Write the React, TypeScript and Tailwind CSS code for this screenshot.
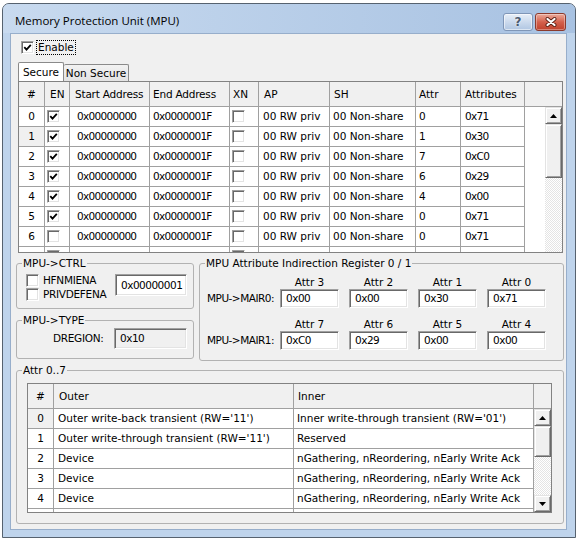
import React from 'react';

// Windows 7 "Basic" style MPU dialog

const regions = [
  { en: true, attr: '0', attrs: '0x71' },
  { en: true, attr: '1', attrs: '0x30' },
  { en: true, attr: '7', attrs: '0xC0' },
  { en: true, attr: '6', attrs: '0x29' },
  { en: true, attr: '4', attrs: '0x00' },
  { en: true, attr: '0', attrs: '0x71' },
  { en: false, attr: '0', attrs: '0x71' },
  { en: false, attr: '0', attrs: '0x71' },
];

const attrRows = [
  { outer: "Outer write-back transient (RW='11')", inner: "Inner write-through transient (RW='01')" },
  { outer: "Outer write-through transient (RW='11')", inner: 'Reserved' },
  { outer: 'Device', inner: 'nGathering, nReordering, nEarly Write Ack' },
  { outer: 'Device', inner: 'nGathering, nReordering, nEarly Write Ack' },
  { outer: 'Device', inner: 'nGathering, nReordering, nEarly Write Ack' },
  { outer: 'Device', inner: 'nGathering, nReordering, nEarly Write Ack' },
];

const mair0 = [
  { label: 'Attr 3', value: '0x00' },
  { label: 'Attr 2', value: '0x00' },
  { label: 'Attr 1', value: '0x30' },
  { label: 'Attr 0', value: '0x71' },
];

const mair1 = [
  { label: 'Attr 7', value: '0xC0' },
  { label: 'Attr 6', value: '0x29' },
  { label: 'Attr 5', value: '0x00' },
  { label: 'Attr 4', value: '0x00' },
];

const headCell = 'flex h-full items-center border-r border-[#a0a0a0] bg-[#f0f0f0]';
const bodyCell = 'flex h-full items-center border-r border-[#a0a0a0]';
const hex = 'tracking-[-0.7px]';

function Tick() {
  return (
    <svg width="9" height="9" viewBox="0 0 9 9" className="block">
      <path d="M1.3 4.2 L3.5 6.6 L7.8 1.9" fill="none" stroke="#000" strokeWidth="1.8" />
    </svg>
  );
}

function CheckBox({ checked = false }: { checked?: boolean }) {
  return (
    <span className="flex h-[13px] w-[13px] shrink-0 items-center justify-center border border-t-[#a0a0a0] border-l-[#a0a0a0] border-b-white border-r-white bg-white shadow-[inset_1px_1px_0_#696969,inset_-1px_-1px_0_#e3e3e3]">
      {checked && <Tick />}
    </span>
  );
}

function TextBox({ value, className = '', readOnly = false }: { value: string; className?: string; readOnly?: boolean }) {
  return (
    <div
      className={`flex items-center border border-t-[#a0a0a0] border-l-[#a0a0a0] border-b-white border-r-white pl-[5px] tracking-[-0.5px] shadow-[inset_1px_1px_0_#696969,inset_-1px_-1px_0_#e3e3e3] ${
        readOnly ? 'bg-[#f0f0f0]' : 'bg-white'
      } ${className}`}
    >
      {value}
    </div>
  );
}

function Group({ label, className = '', children }: { label: string; className?: string; children?: React.ReactNode }) {
  return (
    <div className={`relative rounded-[3px] border border-[#b2b2b2] ${className}`}>
      <span className="absolute left-[5px] top-[-7px] bg-[#f0f0f0] px-[1px] leading-[13px]">{label}</span>
      {children}
    </div>
  );
}

function Arrow({ down = false }: { down?: boolean }) {
  return (
    <svg width="7" height="4" viewBox="0 0 7 4" className="block">
      <path d={down ? 'M0 0 H7 L3.5 4 Z' : 'M0 4 H7 L3.5 0 Z'} fill="#000" />
    </svg>
  );
}

const raised =
  'border border-t-[#e3e3e3] border-l-[#e3e3e3] border-b-[#696969] border-r-[#696969] bg-[#f0f0f0] shadow-[inset_1px_1px_0_#fff,inset_-1px_-1px_0_#a0a0a0]';

function ScrollBar({ thumb, down = false }: { thumb: string; down?: boolean }) {
  return (
    <div className="flex h-full w-[17px] shrink-0 flex-col">
      <div className={`flex h-[17px] shrink-0 items-center justify-center ${raised}`}>
        <Arrow />
      </div>
      <div className={`shrink-0 ${thumb} ${raised}`} />
      <div className="flex-1 bg-[repeating-conic-gradient(#e4e4e4_0%_25%,#ffffff_0%_50%)] bg-[length:2px_2px]" />
      {down && (
        <div className={`flex h-[17px] shrink-0 items-center justify-center ${raised}`}>
          <Arrow down />
        </div>
      )}
    </div>
  );
}

function RegionTable() {
  return (
    <div className="ml-[7px] flex h-[172px] w-[545px] flex-col border border-[#828282] bg-white">
      <div className="flex h-[25px] shrink-0 border-b border-[#a0a0a0]">
        <div className={`${headCell} w-[26px] justify-center`}>#</div>
        <div className={`${headCell} w-[25px] pl-[5px]`}>EN</div>
        <div className={`${headCell} w-[80px] pl-[5px] tracking-[-0.2px]`}>Start Address</div>
        <div className={`${headCell} w-[80px] pl-[3px] tracking-[-0.2px]`}>End Address</div>
        <div className={`${headCell} w-[29px] pl-[3px]`}>XN</div>
        <div className={`${headCell} w-[71px] pl-[5px]`}>AP</div>
        <div className={`${headCell} w-[86px] pl-[4px]`}>SH</div>
        <div className={`${headCell} w-[45px] pl-[3px]`}>Attr</div>
        <div className={`${headCell} w-[64px] pl-[4px]`}>Attributes</div>
        <div className="h-full flex-1 bg-[#f0f0f0]" />
      </div>
      <div className="flex min-h-0 flex-1">
        <div className="w-[506px] shrink-0 overflow-hidden">
          {regions.map((r, i) => (
            <div key={i} className="flex h-[20px] border-b border-[#a0a0a0]">
              <div className={`${bodyCell} w-[26px] justify-center ${i === 1 ? 'bg-[#f0f0f0]' : ''}`}>{i}</div>
              <div className={`${bodyCell} w-[25px] pl-[2px]`}>
                <CheckBox checked={r.en} />
              </div>
              <div className={`${bodyCell} w-[80px] pl-[7px] ${hex}`}>0x00000000</div>
              <div className={`${bodyCell} w-[80px] pl-[3px] ${hex}`}>0x0000001F</div>
              <div className={`${bodyCell} w-[29px] pl-[2px]`}>
                <CheckBox />
              </div>
              <div className={`${bodyCell} w-[71px] pl-[4px]`}>00 RW priv</div>
              <div className={`${bodyCell} w-[86px] pl-[3px]`}>00 Non-share</div>
              <div className={`${bodyCell} w-[45px] pl-[3px]`}>{r.attr}</div>
              <div className={`${bodyCell} w-[64px] pl-[4px] ${hex}`}>{r.attrs}</div>
            </div>
          ))}
        </div>
        <div className="w-[20px] shrink-0" />
        <ScrollBar thumb="h-[54px]" />
      </div>
    </div>
  );
}

function AttrTable() {
  return (
    <div className="ml-[10px] mt-[12px] flex h-[130px] w-[525px] flex-col border border-[#828282] bg-white">
      <div className="flex h-[25px] shrink-0 border-b border-[#a0a0a0]">
        <div className={`${headCell} w-[26px] justify-center`}>#</div>
        <div className={`${headCell} w-[240px] pl-[5px]`}>Outer</div>
        <div className={`${headCell} w-[240px] pl-[4px]`}>Inner</div>
        <div className="h-full flex-1 bg-[#f0f0f0]" />
      </div>
      <div className="flex min-h-0 flex-1">
        <div className="w-[506px] shrink-0 overflow-hidden">
          {attrRows.map((r, i) => (
            <div key={i} className="flex h-[20px] border-b border-[#a0a0a0]">
              <div className={`${bodyCell} w-[26px] justify-center ${i === 0 ? 'bg-[#f0f0f0]' : ''}`}>{i}</div>
              <div className={`${bodyCell} w-[240px] whitespace-nowrap pl-[4px]`}>{r.outer}</div>
              <div className={`${bodyCell} w-[240px] whitespace-nowrap pl-[3px]`}>{r.inner}</div>
            </div>
          ))}
        </div>
        <ScrollBar thumb="h-[31px]" down />
      </div>
    </div>
  );
}

function MairRow({ name, items, first }: { name: string; items: { label: string; value: string }[]; first?: boolean }) {
  return (
    <div className={first ? '' : 'mt-[9px]'}>
      <div className="flex h-[14px] items-center">
        <div className="w-[80px] shrink-0" />
        <div className="flex gap-[10px]">
          {items.map((a) => (
            <div key={a.label} className="w-[59px] text-center">
              {a.label}
            </div>
          ))}
        </div>
      </div>
      <div className="flex h-[19px] items-center">
        <div className="w-[80px] shrink-0 whitespace-nowrap pl-[7px] tracking-[-0.5px]">{name}</div>
        <div className="flex gap-[10px]">
          {items.map((a) => (
            <TextBox key={a.label} value={a.value} className="h-[19px] w-[59px]" />
          ))}
        </div>
      </div>
    </div>
  );
}

export default function App() {
  return (
    <div className="h-[542px] w-[579px] bg-white pl-[2px] pt-[3px] font-['DejaVu_Sans',Tahoma,sans-serif] text-[10.5px] leading-[13px] text-black">
      <div className="flex h-[535px] w-[574px] flex-col rounded-t-[7px] border border-[#56626f] bg-[#bfd4ec]">
        {/* caption */}
        <div className="flex h-[29px] shrink-0 items-start rounded-t-[6px] bg-linear-to-r from-[#c8daef] to-[#a8c2e2] pl-[12px]">
          <span className="mt-[9px] font-['Open_Sans',sans-serif] text-[11.5px] leading-[16px]">Memory Protection Unit (MPU)</span>
          <div className="ml-auto mr-[9px] mt-[9px] flex gap-[2px]">
            <div className="flex h-[18px] w-[30px] items-center justify-center rounded-[3px] border border-[#7f96b7] bg-linear-to-b from-[#e8eff8] via-[#cbdaed] to-[#b0c6e2] shadow-[inset_0_0_0_1px_rgba(255,255,255,0.55)]">
              <span className="font-['DejaVu_Sans',sans-serif] text-[12px] font-bold leading-none text-[#4a5a70] [text-shadow:0_0_2px_#fff]">?</span>
            </div>
            <div className="flex h-[18px] w-[31px] items-center justify-center rounded-[3px] border border-[#8b3a2d] bg-linear-to-b from-[#eaaa9c] via-[#d4604c] to-[#c0412c] shadow-[inset_0_0_0_1px_rgba(255,255,255,0.35)]">
              <svg width="14" height="10" viewBox="0 0 14 10" className="block">
                <path d="M3.5 2 L10.5 8 M10.5 2 L3.5 8" stroke="#5b2016" strokeWidth="4" strokeLinecap="round" />
                <path d="M3.5 2 L10.5 8 M10.5 2 L3.5 8" stroke="#fff" strokeWidth="2.2" strokeLinecap="round" />
              </svg>
            </div>
          </div>
        </div>

        {/* client area */}
        <div className="ml-[7px] flex h-[497px] w-[557px] flex-col border border-[#97aecb] bg-[#f0f0f0]">
          <div className="ml-[10px] mt-[7px] flex h-[13px] items-center">
            <CheckBox checked />
            <span className="ml-[2px] border border-dotted border-black px-[1px] leading-[13px]">Enable</span>
          </div>

          <div className="ml-[7px] mt-[8px] flex h-[19px] items-end">
            <div className="flex h-[19px] w-[46px] items-center justify-center rounded-t-[2px] border border-b-0 border-[#8a8a8a] bg-white">
              Secure
            </div>
            <div className="flex h-[17px] w-[65px] items-center justify-center whitespace-nowrap rounded-t-[2px] border border-b-0 border-l-0 border-[#8a8a8a] bg-linear-to-b from-[#f2f2f2] to-[#e3e3e3]">
              Non Secure
            </div>
          </div>

          <RegionTable />

          <div className="ml-[5px] mt-[10px] flex">
            <div className="flex w-[178px] flex-col">
              <Group label="MPU->CTRL" className="h-[46px]">
                <div className="flex items-start pl-[9px] pt-[10px]">
                  <div className="flex flex-col gap-[1px]">
                    <div className="flex h-[13px] items-center">
                      <CheckBox />
                      <span className="ml-[4px] tracking-[-0.3px]">HFNMIENA</span>
                    </div>
                    <div className="flex h-[13px] items-center">
                      <CheckBox />
                      <span className="ml-[4px] tracking-[-0.3px]">PRIVDEFENA</span>
                    </div>
                  </div>
                  <TextBox value="0x00000001" className="ml-auto mr-[6px] h-[22px] w-[72px]" />
                </div>
              </Group>
              <Group label="MPU->TYPE" className="mt-[11px] h-[39px]">
                <div className="flex items-center pl-[36px] pt-[7px]">
                  <span className="w-[61px] shrink-0 tracking-[-0.3px]">DREGION:</span>
                  <TextBox value="0x10" readOnly className="h-[21px] w-[73px]" />
                </div>
              </Group>
            </div>

            <Group label="MPU Attribute Indirection Register 0 / 1" className="ml-[5px] h-[98px] w-[365px]">
              <div className="pt-[11px]">
                <MairRow name="MPU->MAIR0:" items={mair0} first />
                <MairRow name="MPU->MAIR1:" items={mair1} />
              </div>
            </Group>
          </div>

          <Group label="Attr 0..7" className="ml-[5px] mt-[9px] h-[154px] w-[548px]">
            <AttrTable />
          </Group>
        </div>
      </div>
    </div>
  );
}
